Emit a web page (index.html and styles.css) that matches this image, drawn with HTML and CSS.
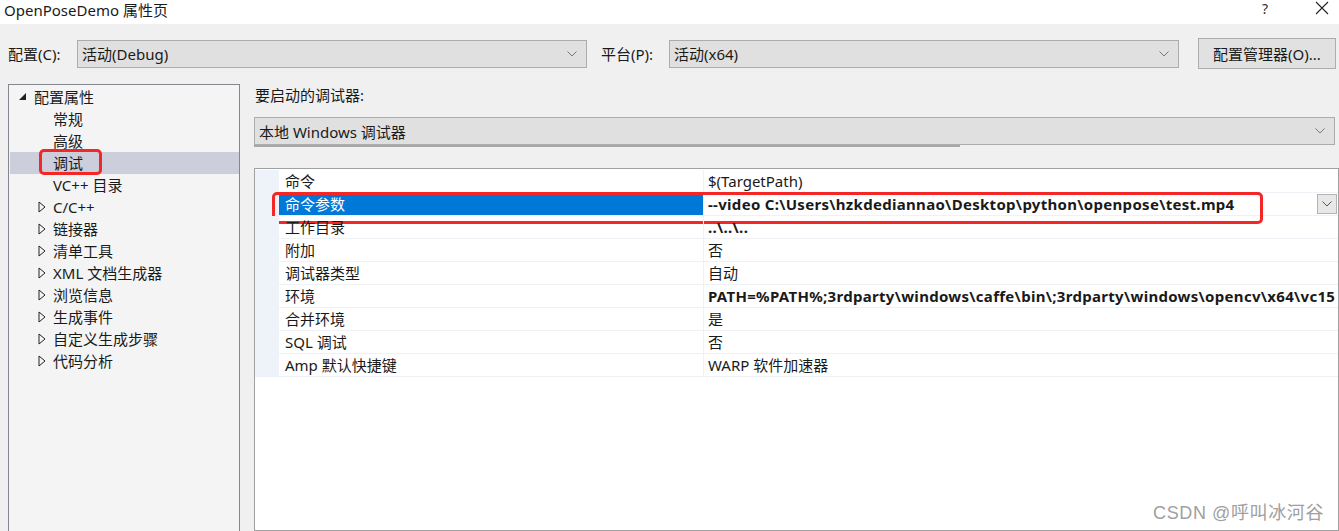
FILE: index.html
```html
<!DOCTYPE html>
<html lang="zh-CN">
<head>
    <meta charset="UTF-8">
    <title>OpenPoseDemo 属性页</title>
    <link rel="stylesheet" href="styles.css">
</head>
<body>
    <div class="titlebar">
        <span class="title">OpenPoseDemo 属性页</span>
        <span class="help">?</span>
        <svg class="close" width="14" height="14" viewBox="0 0 14 14">
            <path d="M1 1 L13 13 M13 1 L1 13" stroke="#222" stroke-width="1.1" fill="none"/>
        </svg>
    </div>

    <div class="window">
        <div class="toolbar">
            <label class="field-label lbl-config">配置(C):</label>
            <div class="combo combo-config">
                <span>活动(Debug)</span>
                <svg class="chevron" width="10" height="6" viewBox="0 0 10 6"><path d="M0.5 0.5 L5 5 L9.5 0.5" stroke="#777" fill="none"/></svg>
            </div>
            <label class="field-label lbl-platform">平台(P):</label>
            <div class="combo combo-platform">
                <span>活动(x64)</span>
                <svg class="chevron" width="10" height="6" viewBox="0 0 10 6"><path d="M0.5 0.5 L5 5 L9.5 0.5" stroke="#777" fill="none"/></svg>
            </div>
            <button class="manager-btn">配置管理器(O)...</button>
        </div>

        <div class="content">
            <ul class="tree">
                <li class="node root">
                    <svg class="arrow" width="8" height="8" viewBox="0 0 8 8"><polygon points="7,0 7,7 0,7" fill="#222"/></svg>
                    配置属性
                </li>
                <li class="node leaf">常规</li>
                <li class="node leaf">高级</li>
                <li class="node leaf selected">调试<span class="mark mark-tree"></span></li>
                <li class="node leaf">VC++ 目录</li>
                <li class="node closed"><svg class="arrow" width="8" height="12" viewBox="0 0 8 12"><polygon points="1,1 7,6 1,11" fill="none" stroke="#222"/></svg>C/C++</li>
                <li class="node closed"><svg class="arrow" width="8" height="12" viewBox="0 0 8 12"><polygon points="1,1 7,6 1,11" fill="none" stroke="#222"/></svg>链接器</li>
                <li class="node closed"><svg class="arrow" width="8" height="12" viewBox="0 0 8 12"><polygon points="1,1 7,6 1,11" fill="none" stroke="#222"/></svg>清单工具</li>
                <li class="node closed"><svg class="arrow" width="8" height="12" viewBox="0 0 8 12"><polygon points="1,1 7,6 1,11" fill="none" stroke="#222"/></svg>XML 文档生成器</li>
                <li class="node closed"><svg class="arrow" width="8" height="12" viewBox="0 0 8 12"><polygon points="1,1 7,6 1,11" fill="none" stroke="#222"/></svg>浏览信息</li>
                <li class="node closed"><svg class="arrow" width="8" height="12" viewBox="0 0 8 12"><polygon points="1,1 7,6 1,11" fill="none" stroke="#222"/></svg>生成事件</li>
                <li class="node closed"><svg class="arrow" width="8" height="12" viewBox="0 0 8 12"><polygon points="1,1 7,6 1,11" fill="none" stroke="#222"/></svg>自定义生成步骤</li>
                <li class="node closed"><svg class="arrow" width="8" height="12" viewBox="0 0 8 12"><polygon points="1,1 7,6 1,11" fill="none" stroke="#222"/></svg>代码分析</li>
            </ul>

            <div class="pane">
                <div class="pane-label">要启动的调试器:</div>
                <div class="combo combo-debugger">
                    <span>本地 Windows 调试器</span>
                    <svg class="chevron" width="10" height="6" viewBox="0 0 10 6"><path d="M0.5 0.5 L5 5 L9.5 0.5" stroke="#777" fill="none"/></svg>
                </div>

                <div class="grid">
                    <div class="row"><div class="gutter"></div><div class="name">命令</div><div class="value">$(TargetPath)</div></div>
                    <div class="row active">
                        <div class="gutter"></div>
                        <div class="name">命令参数</div>
                        <div class="value bold">--video C:\Users\hzkdediannao\Desktop\python\openpose\test.mp4</div>
                        <div class="drop">
                            <svg width="10" height="6" viewBox="0 0 10 6"><path d="M0.5 0.5 L5 5 L9.5 0.5" stroke="#555" fill="none"/></svg>
                        </div>
                        <span class="mark mark-grid"></span>
                    </div>
                    <div class="row"><div class="gutter"></div><div class="name">工作目录</div><div class="value bold">..\..\..</div></div>
                    <div class="row"><div class="gutter"></div><div class="name">附加</div><div class="value">否</div></div>
                    <div class="row"><div class="gutter"></div><div class="name">调试器类型</div><div class="value">自动</div></div>
                    <div class="row"><div class="gutter"></div><div class="name">环境</div><div class="value bold">PATH=%PATH%;3rdparty\windows\caffe\bin\;3rdparty\windows\opencv\x64\vc15</div></div>
                    <div class="row"><div class="gutter"></div><div class="name">合并环境</div><div class="value">是</div></div>
                    <div class="row"><div class="gutter"></div><div class="name">SQL 调试</div><div class="value">否</div></div>
                    <div class="row"><div class="gutter"></div><div class="name">Amp 默认快捷键</div><div class="value">WARP 软件加速器</div></div>

                    <div class="watermark">CSDN @呼叫冰河谷</div>
                </div>
            </div>
        </div>
    </div>
</body>
</html>
```

FILE: styles.css
```css
body {
    margin: 0;
    width: 1339px;
    height: 531px;
    overflow: hidden;
    font-family: "Noto Sans", "Noto Sans CJK SC", sans-serif;
    font-size: 15px;
    color: #1a1a1a;
}

.titlebar {
    height: 24px;
    background: #fff;
    display: flex;
    align-items: center;
    position: relative;
}
.title {
    margin-left: 4px;
    font-size: 15px;
    margin-top: -6px;
}
.help {
    margin-left: auto;
    margin-right: 47px;
    font-size: 14px;
    margin-top: -8px;
    color: #333;
}
.close {
    margin-right: 10px;
    margin-top: -8px;
}

.window {
    background: #f0f0f0;
    height: 507px;
    display: flex;
    flex-direction: column;
}

/* top row: configuration / platform */
.toolbar {
    display: flex;
    align-items: center;
    padding: 14px 0 15px 8px;
    height: 31px;
}
.field-label {
    white-space: nowrap;
    flex-shrink: 0;
}
.lbl-config { width: 69px; }
.lbl-platform { width: 68px; margin-left: 14px; }

.combo {
    box-sizing: border-box;
    height: 28px;
    background: #e0e0e0;
    border: 1px solid #acacac;
    display: flex;
    align-items: center;
    padding: 0 9px 0 4px;
    flex-shrink: 0;
}
.combo span {
    flex: 1;
}
.combo-config, .combo-platform { width: 510px; }

.manager-btn {
    box-sizing: border-box;
    width: 138px;
    height: 31px;
    margin-left: 19px;
    background: #e1e1e1;
    border: 1px solid #adadad;
    font-family: inherit;
    font-size: 15px;
    color: #1a1a1a;
    padding: 0;
    flex-shrink: 0;
}

.content {
    flex: 1;
    display: flex;
    padding-left: 8px;
    min-height: 0;
}

/* left tree */
.tree {
    list-style: none;
    margin: 0;
    padding: 1px 0 0;
    width: 232px;
    flex-shrink: 0;
    box-sizing: border-box;
    background: #f4f4f4;
    border: 1px solid #828790;
    border-bottom: none;
}
.node {
    position: relative;
    height: 22px;
    line-height: 22px;
    margin-left: 1px;
    white-space: nowrap;
}
.root { padding-left: 24px; }
.root .arrow {
    position: absolute;
    left: 9px;
    top: 7px;
}
.leaf { padding-left: 43px; }
.closed { padding-left: 43px; }
.closed .arrow {
    position: absolute;
    left: 28px;
    top: 5px;
}
.selected { background: #cccedb; }

.mark {
    position: absolute;
    border: 3px solid #f52626;
    border-radius: 5px;
    box-sizing: border-box;
    pointer-events: none;
}
.mark-tree {
    left: 29px;
    top: -3px;
    width: 63px;
    height: 26px;
}

/* right pane */
.pane {
    flex: 1;
    min-width: 0;
    margin-left: 14px;
    display: flex;
    flex-direction: column;
}
.pane-label {
    height: 22px;
    line-height: 22px;
    margin-left: 1px;
}
.combo-debugger {
    margin-top: 11px;
    margin-right: 4px;
    position: relative;
}
.combo-debugger::after {
    content: "";
    position: absolute;
    left: -1px;
    bottom: -3px;
    width: 706px;
    height: 2px;
    background: #a8a8a8;
}

.grid {
    flex: 1;
    margin-top: 23px;
    background: #fff;
    border: 1px solid #a0a0a0;
    padding-top: 1px;
    position: relative;
    overflow: hidden;
}
.row {
    display: flex;
    height: 23px;
    line-height: 22px;
    position: relative;
}
.gutter {
    width: 24px;
    flex-shrink: 0;
    background: #eef3fa;
}
.name {
    width: 424px;
    flex-shrink: 0;
    box-sizing: border-box;
    padding-left: 6px;
    border-bottom: 1px solid #eef2f7;
    white-space: nowrap;
}
.value {
    flex: 1;
    min-width: 0;
    padding-left: 4px;
    border-left: 1px solid #eef2f7;
    border-bottom: 1px solid #eef2f7;
    white-space: nowrap;
    overflow: hidden;
}
.bold {
    font-weight: bold;
    letter-spacing: 0.3px;
}

.active .name {
    background: #0078d7;
    color: #fff;
}
.drop {
    position: absolute;
    right: 1px;
    top: 1px;
    width: 20px;
    height: 20px;
    box-sizing: border-box;
    background: #e8e8e8;
    border: 1px solid #b4b4b4;
    display: flex;
    align-items: center;
    justify-content: center;
}
.mark-grid {
    left: 17px;
    top: -1px;
    width: 991px;
    height: 32px;
}

.watermark {
    position: absolute;
    right: 14px;
    bottom: 6px;
    font-size: 18px;
    letter-spacing: 0.6px;
    color: #a0a0a0;
    font-family: "Liberation Sans", "Noto Sans CJK SC", sans-serif;
}
```
